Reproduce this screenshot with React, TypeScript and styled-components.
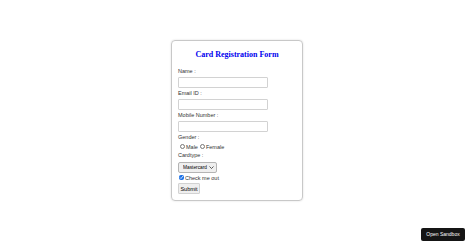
import styled, { createGlobalStyle } from 'styled-components'

const GlobalStyle = createGlobalStyle`
  html, body {
    margin: 0;
    padding: 0;
    background: #ffffff;
  }
  body {
    width: 474px;
    height: 248px;
    position: relative;
    font-family: "Liberation Sans", Arial, sans-serif;
  }
`

const Page = styled.div`
  display: flex;
  justify-content: center;
  padding-top: 40px;
`

const Card = styled.form`
  box-sizing: border-box;
  width: 132px;
  height: 161px;
  border: 1px solid #c8c8c8;
  border-radius: 4px;
  box-shadow: 0 0 2px rgba(0, 0, 0, 0.15);
  padding: 9px 6px 0 6px;
  display: flex;
  flex-direction: column;
  align-items: flex-start;
`

const Title = styled.h2`
  align-self: stretch;
  margin: 0 0 8px 0;
  text-align: center;
  font-family: "Liberation Serif", "Times New Roman", serif;
  font-weight: bold;
  font-size: 8px;
  line-height: 10px;
  color: #0000ee;
`

const Label = styled.label`
  font-size: 5.5px;
  line-height: 7px;
  color: #333;
`

const TextInput = styled.input`
  box-sizing: border-box;
  width: 90px;
  height: 11px;
  margin: 2px 0 2px 0;
  padding: 0 2px;
  border: 1px solid #d2d2d2;
  border-radius: 1px;
  font-size: 5.5px;
  outline: none;
`

const RadioRow = styled.div`
  display: flex;
  align-items: center;
  margin: 2px 0 2px 0;
  height: 7px;
  font-size: 5.5px;
  color: #333;
`

const Radio = styled.input`
  width: 5px;
  height: 5px;
  margin: 0 1px 0 2px;
`

const SelectBox = styled.div`
  position: relative;
  margin: 3px 0 0 0;
`

const Select = styled.select`
  box-sizing: border-box;
  appearance: none;
  display: block;
  height: 11px;
  width: 39px;
  padding: 0 0 0 4px;
  font-family: "Liberation Sans", Arial, sans-serif;
  font-size: 4.8px;
  border: 1px solid #b4b4b4;
  border-radius: 2px;
  background: #efefef;
  color: #000;
  outline: none;
`

const Chevron = styled.svg`
  position: absolute;
  right: 3px;
  top: 4px;
  width: 5px;
  height: 3px;
  pointer-events: none;
`

const CheckRow = styled.div`
  display: flex;
  align-items: center;
  margin-top: 1px;
  height: 7px;
  font-size: 5.5px;
  color: #333;
`

const Check = styled.input`
  width: 5px;
  height: 5px;
  margin: 0 1px 0 1px;
  accent-color: #1a6fe6;
`

const SubmitButton = styled.button`
  box-sizing: border-box;
  margin-top: 2px;
  height: 11px;
  width: 22px;
  padding: 0;
  font-family: "Liberation Sans", Arial, sans-serif;
  font-size: 5.5px;
  border: 1px solid #d2d2d2;
  border-radius: 1px;
  background: #efefef;
  color: #000;
`

const SandboxButton = styled.a`
  position: absolute;
  left: 421px;
  top: 228px;
  width: 44px;
  height: 13px;
  box-sizing: border-box;
  background: #151515;
  color: #fff;
  font-size: 5px;
  line-height: 13px;
  text-align: center;
  border-radius: 2px;
  text-decoration: none;
`

export default function App() {
  return (
    <>
      <GlobalStyle />
      <Page>
        <Card onSubmit={(e) => e.preventDefault()}>
          <Title>Card Registration Form</Title>
          <Label>Name :</Label>
          <TextInput type="text" />
          <Label>Email ID :</Label>
          <TextInput type="email" />
          <Label>Mobile Number :</Label>
          <TextInput type="text" />
          <Label>Gender :</Label>
          <RadioRow>
            <Radio type="radio" name="gender" />Male
            <Radio type="radio" name="gender" />Female
          </RadioRow>
          <Label>Cardtype :</Label>
          <SelectBox>
            <Select defaultValue="Mastercard">
              <option>Mastercard</option>
              <option>Visa</option>
            </Select>
            <Chevron viewBox="0 0 10 6">
              <path d="M1 1l4 4 4-4" fill="none" stroke="#333" strokeWidth="1.6" />
            </Chevron>
          </SelectBox>
          <CheckRow>
            <Check type="checkbox" defaultChecked />Check me out
          </CheckRow>
          <SubmitButton type="submit">Submit</SubmitButton>
        </Card>
      </Page>
      <SandboxButton href="#">Open Sandbox</SandboxButton>
    </>
  )
}
